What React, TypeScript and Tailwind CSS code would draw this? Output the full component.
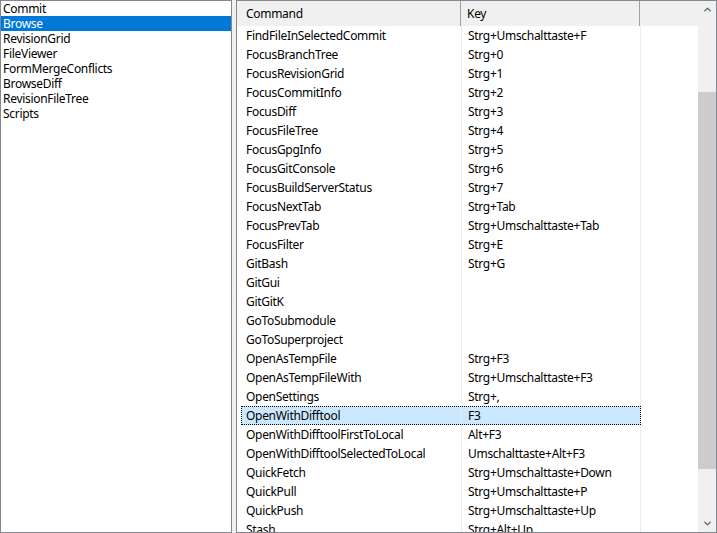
import { ChevronDown, ChevronUp } from "lucide-react";

const modules = [
  "Commit",
  "Browse",
  "RevisionGrid",
  "FileViewer",
  "FormMergeConflicts",
  "BrowseDiff",
  "RevisionFileTree",
  "Scripts",
];

const hotkeys: [string, string][] = [
  ["FindFileInSelectedCommit", "Strg+Umschalttaste+F"],
  ["FocusBranchTree", "Strg+0"],
  ["FocusRevisionGrid", "Strg+1"],
  ["FocusCommitInfo", "Strg+2"],
  ["FocusDiff", "Strg+3"],
  ["FocusFileTree", "Strg+4"],
  ["FocusGpgInfo", "Strg+5"],
  ["FocusGitConsole", "Strg+6"],
  ["FocusBuildServerStatus", "Strg+7"],
  ["FocusNextTab", "Strg+Tab"],
  ["FocusPrevTab", "Strg+Umschalttaste+Tab"],
  ["FocusFilter", "Strg+E"],
  ["GitBash", "Strg+G"],
  ["GitGui", ""],
  ["GitGitK", ""],
  ["GoToSubmodule", ""],
  ["GoToSuperproject", ""],
  ["OpenAsTempFile", "Strg+F3"],
  ["OpenAsTempFileWith", "Strg+Umschalttaste+F3"],
  ["OpenSettings", "Strg+,"],
  ["OpenWithDifftool", "F3"],
  ["OpenWithDifftoolFirstToLocal", "Alt+F3"],
  ["OpenWithDifftoolSelectedToLocal", "Umschalttaste+Alt+F3"],
  ["QuickFetch", "Strg+Umschalttaste+Down"],
  ["QuickPull", "Strg+Umschalttaste+P"],
  ["QuickPush", "Strg+Umschalttaste+Up"],
  ["Stash", "Strg+Alt+Up"],
];

const selectedModule = "Browse";
const selectedCommand = "OpenWithDifftool";

export default function App() {
  return (
    <div
      className="flex gap-[4px] w-[717px] h-[533px] bg-[#f0f0f0] text-[12px] tracking-[-0.3px] text-black overflow-hidden"
      style={{ fontFamily: '"Noto Sans", "Liberation Sans", sans-serif' }}
    >
      {/* module list */}
      <div className="w-[232px] h-full border border-[#828790] bg-white">
        {modules.map((m) => (
          <div
            key={m}
            className={`h-[15px] leading-[15px] pl-[2px] whitespace-nowrap ${
              m === selectedModule ? "bg-[#0078d7] text-white" : ""
            }`}
          >
            {m}
          </div>
        ))}
      </div>

      {/* hotkey grid */}
      <div className="flex flex-1 h-full border border-[#828790] bg-white">
        <div className="flex flex-col flex-1 min-w-0">
          <div className="flex h-[25px] shrink-0 bg-[#f0f0f0]">
            <div className="w-[224px] pl-[9px] leading-[25px] border-r border-[#a0a0a0]">
              Command
            </div>
            <div className="w-[179px] pl-[6px] leading-[25px] border-r border-[#a0a0a0]">
              Key
            </div>
            <div className="flex-1" />
          </div>
          <div className="flex-1 overflow-hidden">
            {hotkeys.map(([cmd, key]) => {
              const sel = cmd === selectedCommand;
              return (
                <div key={cmd} className="flex h-[19px] leading-[19px]">
                  <div className="w-[4px] shrink-0" />
                  <div
                    className={`flex shrink-0 ${
                      sel
                        ? "bg-[#cce8ff] outline-1 outline-dotted outline-offset-[-1px] outline-black"
                        : ""
                    }`}
                  >
                    <div className="w-[221px] pl-[5px] whitespace-nowrap border-r border-[#e3ecf8]">
                      {cmd}
                    </div>
                    <div className="w-[179px] pl-[6px] whitespace-nowrap border-r border-[#e3ecf8]">
                      {key}
                    </div>
                  </div>
                  <div className="flex-1" />
                </div>
              );
            })}
          </div>
        </div>

        {/* vertical scrollbar */}
        <div className="flex flex-col w-[18px] shrink-0 bg-[#f0f0f0]">
          <div className="flex h-[17px] items-center justify-center text-[#606060]">
            <ChevronUp size={11} strokeWidth={3} />
          </div>
          <div className="flex flex-col flex-1 pt-[74px] pb-[46px]">
            <div className="flex-1 bg-[#cdcdcd]" />
          </div>
          <div className="flex h-[17px] items-center justify-center text-[#606060]">
            <ChevronDown size={11} strokeWidth={3} />
          </div>
        </div>
      </div>
    </div>
  );
}
